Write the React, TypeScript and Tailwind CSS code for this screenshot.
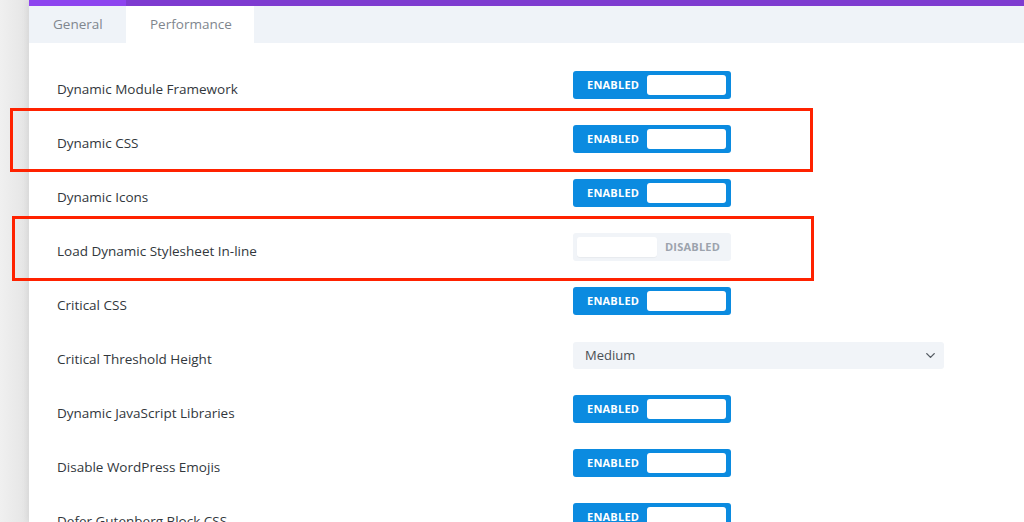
import { ChevronDown } from "lucide-react";

type Row = {
  label: string;
  kind: "on" | "off" | "select";
};

const rows: Row[] = [
  { label: "Dynamic Module Framework", kind: "on" },
  { label: "Dynamic CSS", kind: "on" },
  { label: "Dynamic Icons", kind: "on" },
  { label: "Load Dynamic Stylesheet In-line", kind: "off" },
  { label: "Critical CSS", kind: "on" },
  { label: "Critical Threshold Height", kind: "select" },
  { label: "Dynamic JavaScript Libraries", kind: "on" },
  { label: "Disable WordPress Emojis", kind: "on" },
  { label: "Defer Gutenberg Block CSS", kind: "on" },
];

function Toggle({ on }: { on: boolean }) {
  if (on) {
    return (
      <div className="mb-2 flex h-[28px] w-[158px] shrink-0 items-center rounded-[3px] bg-[#0b8be0] pr-[5px]">
        <span className="w-[74px] pl-[14px] text-[11px] font-bold tracking-[0.02em] text-white">ENABLED</span>
        <span className="h-[20px] flex-1 rounded-[3px] bg-white" />
      </div>
    );
  }
  return (
    <div className="mb-2 flex h-[28px] w-[158px] shrink-0 items-center rounded-[3px] bg-[#f1f4f8] pl-[4px]">
      <span className="h-[20px] w-[80px] rounded-[3px] bg-white shadow-[0_1px_1px_rgba(0,0,0,0.04)]" />
      <span className="pl-[8px] text-[11px] font-bold tracking-[0.02em] text-[#9ca3ad]">DISABLED</span>
    </div>
  );
}

function Select() {
  return (
    <div className="mb-2 flex h-[27px] w-[371px] shrink-0 items-center justify-between rounded-[3px] bg-[#f1f4f8] pl-[12px] pr-[6px]">
      <span className="pt-[2px] text-[13px] text-[#4a4f55]">Medium</span>
      <ChevronDown className="h-[15px] w-[15px] text-[#555b62]" strokeWidth={2.2} />
    </div>
  );
}

export default function App() {
  return (
    <main
      className="relative flex h-[522px] w-[1024px] overflow-hidden bg-[#ebebeb]"
      style={{ fontFamily: '"Open Sans", "Liberation Sans", sans-serif' }}
    >
      <div className="w-[29px] shrink-0 bg-[linear-gradient(90deg,#f0f0f0,#e4e4e4)]" />
      <div className="flex flex-1 flex-col bg-white shadow-[-2px_0_6px_rgba(0,0,0,0.06)]">
        <div className="flex h-[6px] shrink-0">
          <div className="w-[97px] bg-[#8d44ef]" />
          <div className="flex-1 bg-[#7e3bd0]" />
        </div>
        <div className="flex h-[37px] shrink-0 bg-[#eff3f8] text-[13.5px] text-[#80868e]">
          <div className="flex w-[97px] items-center pl-[24px]">General</div>
          <div className="flex w-[128px] items-center bg-white pl-[24px]">Performance</div>
        </div>
        <div className="shrink-0 pt-[19px]">
          {rows.map((row) => (
            <div key={row.label} className="flex h-[54px] items-center">
              <span className="w-[544px] shrink-0 pl-[28px] text-[13.5px] font-medium text-[#32373c]">
                {row.label}
              </span>
              {row.kind === "select" ? <Select /> : <Toggle on={row.kind === "on"} />}
            </div>
          ))}
        </div>
      </div>

      <div className="pointer-events-none absolute left-[10px] top-[108px] h-[64px] w-[803px] border-[3px] border-[#ff2200]" />
      <div className="pointer-events-none absolute left-[12px] top-[216px] h-[65px] w-[802px] border-[3px] border-[#ff2200]" />
    </main>
  );
}
